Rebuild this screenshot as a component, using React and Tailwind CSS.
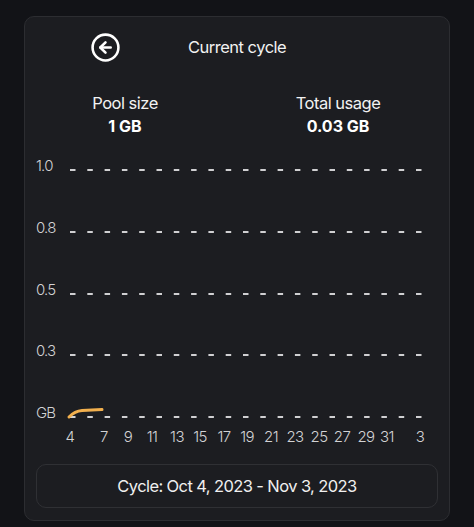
import React from 'react';
import { CircleArrowLeft } from 'lucide-react';

const rows = ['1.0', '0.8', '0.5', '0.3', 'GB'];

// day ticks along the x axis, centre in page px
const ticks = [
  ['4', 70], ['7', 104], ['9', 128], ['11', 152], ['13', 177], ['15', 200],
  ['17', 224], ['19', 247], ['21', 271], ['23', 295], ['25', 319], ['27', 342],
  ['29', 366], ['31', 387], ['3', 420],
];

const ChartRow = ({ label, last }) => (
  <div className="flex h-[20px] items-start">
    <span className="w-[34px] text-[15px] leading-[20px] font-light text-[#d2d2d4] tracking-[-0.8px]">{label}</span>
    <svg width="356" height="20" className="overflow-visible">
      <line x1="0" y1="14" x2="356" y2="14" stroke="#d0d0d2" strokeWidth="1.8" strokeDasharray="5.5 11.8" />
      {last && (
        <path d="M-1 14 C 3 10, 6 8, 12 7.5 L 32 6.5" fill="none" stroke="#f2b04e" strokeWidth="3" strokeLinecap="round" />
      )}
    </svg>
  </div>
);

export default function App() {
  return (
    <div className="min-h-[527px] bg-[#121317] pt-[16px] px-[24px] font-['Inter',sans-serif]">
      <div className="h-[505px] rounded-[10px] border border-[#2c2d31] bg-[#1c1d21] pt-[16px] px-[11px]">
        {/* header */}
        <div className="flex items-center h-[28px] pl-[54px]">
          <CircleArrowLeft className="w-[31px] h-[31px] text-white" strokeWidth={2} />
          <span className="ml-[67px] text-[16.5px] text-[#f2f2f2] tracking-[-0.5px]">Current cycle</span>
        </div>

        {/* stats */}
        <div className="flex mt-[32px] -ml-[6px]">
          <div className="w-[190px] text-center">
            <div className="text-[16.5px] leading-[20px] text-[#f2f2f2] tracking-[-0.5px]">Pool size</div>
            <div className="mt-[3px] text-[16px] leading-[20px] font-bold text-white">1 GB</div>
          </div>
          <div className="ml-[23px] w-[190px] text-center">
            <div className="text-[16.5px] leading-[20px] text-[#f2f2f2] tracking-[-0.5px]">Total usage</div>
            <div className="mt-[3px] text-[16px] leading-[20px] font-bold text-white">0.03 GB</div>
          </div>
        </div>

        {/* chart */}
        <div className="mt-[20px] flex flex-col gap-[41.75px]">
          {rows.map((r, i) => (
            <ChartRow key={r} label={r} last={i === rows.length - 1} />
          ))}
        </div>
        <div className="relative h-[20px] mt-[4px] -ml-[11px]">
          {ticks.map(([t, x]) => (
            <span
              key={t + x}
              className="absolute top-0 -translate-x-1/2 text-[15px] leading-[20px] font-light text-[#d2d2d4] tracking-[-0.6px]"
              style={{ left: x - 25 }}
            >
              {t}
            </span>
          ))}
        </div>

        {/* cycle range */}
        <div className="mt-[17px] h-[44px] rounded-[10px] border border-[#2f3034] flex items-center justify-center">
          <span className="text-[16.5px] text-[#f0f0f0] tracking-[-0.6px]">Cycle: Oct 4, 2023 - Nov 3, 2023</span>
        </div>
      </div>
    </div>
  );
}
